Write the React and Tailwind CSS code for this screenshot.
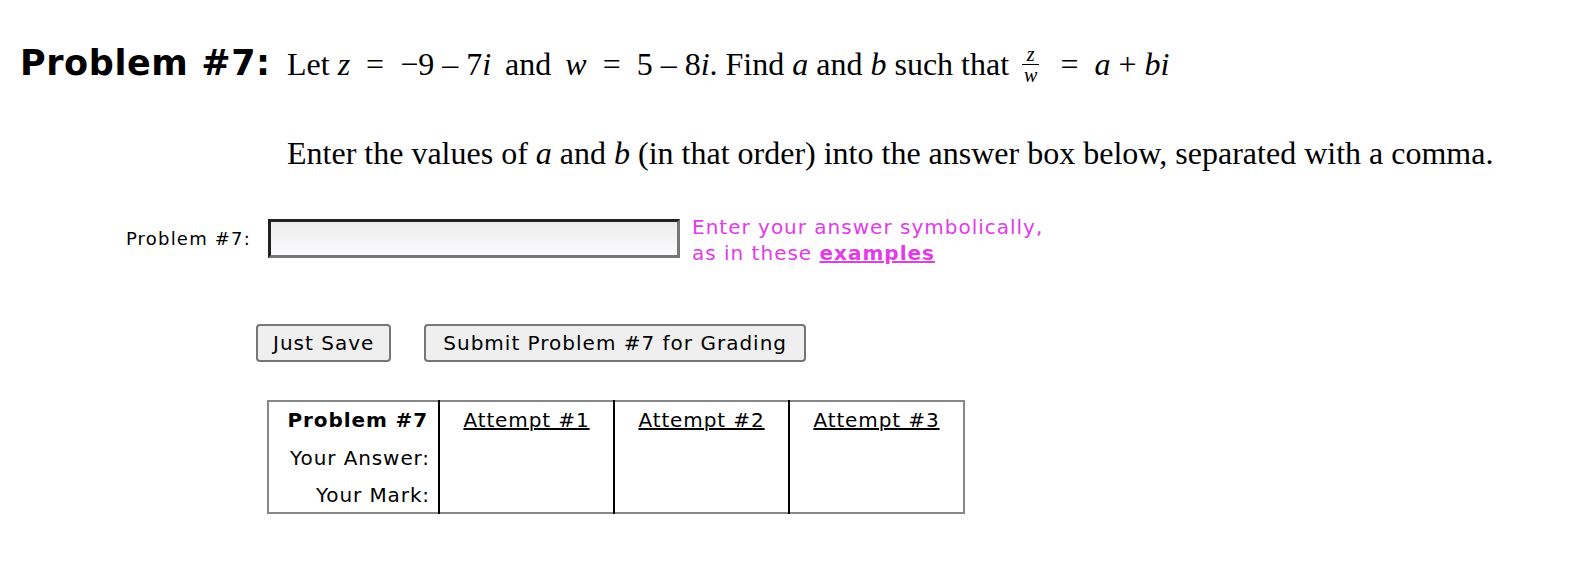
import React from 'react';

const serif = { fontFamily: '"Liberation Serif", "Times New Roman", serif' };

const Frac = () => (
    <span className="inline-flex flex-col items-center align-middle mx-[13px] text-[20px] leading-[20px] relative top-[-3px]">
        <span className="italic px-[2px]">z</span>
        <span className="w-full border-t border-black"></span>
        <span className="italic px-[2px]">w</span>
    </span>
);

const App = () => {
    return (
        <div className="w-[1578px] h-[570px] bg-white text-black font-['DejaVu_Sans',Verdana,sans-serif]">
            <div className="flex items-baseline pt-[38px] pl-[20px]">
                <h2 className="text-[35px] font-bold leading-[50px] tracking-[0.6px] w-[267px] shrink-0">Problem #7:</h2>
                <div className="text-[32px] leading-[50px]" style={serif}>
                    Let <i>z</i> <span className="mx-[8px]">=</span> &minus;9 &ndash; 7<i>i</i> <span className="ml-[6px]">and</span> <i className="ml-[6px]">w</i>{' '}
                    <span className="mx-[8px]">=</span> 5 &ndash; 8<i>i</i>. Find <i>a</i> and <i>b</i> such that
                    <Frac />
                    <span className="mx-[8px]">=</span> <i>a</i> + <i>bi</i>
                </div>
            </div>

            <p className="pl-[287px] mt-[46px] text-[32px] leading-[36px]" style={serif}>
                Enter the values of <i>a</i> and <i>b</i> (in that order) into the answer box below, separated with a comma.
            </p>

            <div className="flex items-center mt-[43px]">
                <label className="w-[251px] text-right text-[18px] tracking-[1.2px] shrink-0">Problem #7:</label>
                <input
                    type="text"
                    className="ml-[17px] w-[412px] h-[39px] border-[3px] border-t-[#222] border-l-[#222] border-b-[#777] border-r-[#777] bg-gradient-to-b from-[#ececec] to-[#fcfcfe] outline-none"
                />
                <div className="relative top-[3px] -mt-[3px] ml-[12px] text-[20px] tracking-[1px] leading-[26px] text-[#e23be8]">
                    <div>Enter your answer symbolically,</div>
                    <div>as in these <a href="#" className="font-bold underline">examples</a></div>
                </div>
            </div>

            <div className="flex gap-[33px] pl-[256px] mt-[61px]">
                <button className="h-[38px] px-[15px] text-[20px] tracking-[1px] bg-[#efefef] border-2 border-[#767676] rounded-[4px]">Just Save</button>
                <button className="h-[38px] px-[17px] text-[20px] tracking-[1px] bg-[#efefef] border-2 border-[#767676] rounded-[4px]">Submit Problem #7 for Grading</button>
            </div>

            <table className="ml-[267px] mt-[38px] border-2 border-[#888] border-collapse text-[20px] tracking-[0.9px]">
                <tbody>
                    <tr className="h-[37px]">
                        <th className="w-[171px] text-right pr-[10px] font-bold border-r-2 border-black">Problem #7</th>
                        <td className="w-[175px] text-center border-r-2 border-black"><a href="#" className="underline">Attempt #1</a></td>
                        <td className="w-[175px] text-center border-r-2 border-black"><a href="#" className="underline">Attempt #2</a></td>
                        <td className="w-[175px] text-center"><a href="#" className="underline">Attempt #3</a></td>
                    </tr>
                    <tr className="h-[39px]">
                        <td className="text-right pr-[8px] border-r-2 border-black">Your Answer:</td>
                        <td className="border-r-2 border-black"></td>
                        <td className="border-r-2 border-black"></td>
                        <td></td>
                    </tr>
                    <tr className="h-[36px]">
                        <td className="text-right pr-[8px] border-r-2 border-black">Your Mark:</td>
                        <td className="border-r-2 border-black"></td>
                        <td className="border-r-2 border-black"></td>
                        <td></td>
                    </tr>
                </tbody>
            </table>
        </div>
    );
};

export default App;
